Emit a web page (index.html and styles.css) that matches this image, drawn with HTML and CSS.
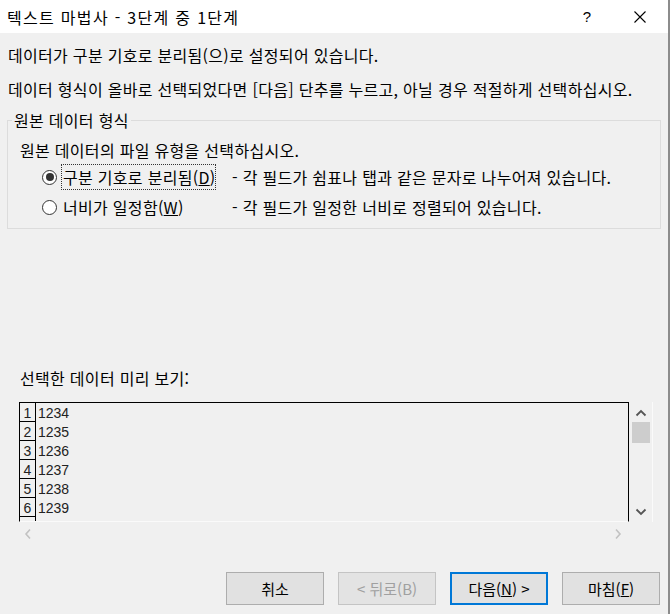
FILE: index.html
```html
<!DOCTYPE html>
<html lang="ko">
<head>
<meta charset="utf-8">
<title>텍스트 마법사</title>
<link rel="stylesheet" href="styles.css">
</head>
<body>
<div class="win">
  <div class="titlebar">
    <span class="title">텍스트 마법사 - 3단계 중 1단계</span>
    <span class="help">?</span>
    <span class="close"><svg width="14" height="14" viewBox="0 0 14 14"><path d="M1.5 1.5 L12.5 12.5 M12.5 1.5 L1.5 12.5" stroke="#000" stroke-width="1.1" fill="none"/></svg></span>
  </div>
  <div class="content">
    <p class="line l1">데이터가 구분 기호로 분리됨(으)로 설정되어 있습니다.</p>
    <p class="line l2">데이터 형식이 올바로 선택되었다면 [다음] 단추를 누르고, 아닐 경우 적절하게 선택하십시오.</p>
    <fieldset class="group">
      <legend class="legend">원본 데이터 형식</legend>
      <p class="line sub">원본 데이터의 파일 유형을 선택하십시오.</p>
      <div class="opt opt1">
        <span class="radio on"></span>
        <span class="lbl focus">구분 기호로 분리됨(<u>D</u>)</span>
        <span class="desc">- 각 필드가 쉼표나 탭과 같은 문자로 나누어져 있습니다.</span>
      </div>
      <div class="opt opt2">
        <span class="radio"></span>
        <span class="lbl">너비가 일정함(<u>W</u>)</span>
        <span class="desc">- 각 필드가 일정한 너비로 정렬되어 있습니다.</span>
      </div>
    </fieldset>
    <p class="line prevlabel">선택한 데이터 미리 보기:</p>
    <div class="preview">
      <div class="pv">
        <div class="row"><span class="num">1</span><span class="val">1234</span></div>
        <div class="row"><span class="num">2</span><span class="val">1235</span></div>
        <div class="row"><span class="num">3</span><span class="val">1236</span></div>
        <div class="row"><span class="num">4</span><span class="val">1237</span></div>
        <div class="row"><span class="num">5</span><span class="val">1238</span></div>
        <div class="row"><span class="num">6</span><span class="val">1239</span></div>
        <div class="row"><span class="num"></span><span class="val"></span></div>
      </div>
      <div class="vscroll">
        <svg class="arr" width="12" height="8" viewBox="0 0 12 8"><path d="M1.5 6.5 L6 2 L10.5 6.5" stroke="#555" stroke-width="1.8" fill="none"/></svg>
        <div class="thumb"></div>
        <div class="track"></div>
        <svg class="arr" width="12" height="8" viewBox="0 0 12 8"><path d="M1.5 1.5 L6 6 L10.5 1.5" stroke="#555" stroke-width="1.8" fill="none"/></svg>
      </div>
      <div class="hscroll">
        <svg width="8" height="12" viewBox="0 0 8 12"><path d="M6 1.5 L2 6 L6 10.5" stroke="#c2c2c2" stroke-width="1.6" fill="none"/></svg>
        <svg width="8" height="12" viewBox="0 0 8 12"><path d="M2 1.5 L6 6 L2 10.5" stroke="#c2c2c2" stroke-width="1.6" fill="none"/></svg>
      </div>
      <div class="corner"></div>
    </div>
    <div class="buttons">
      <button class="btn">취소</button>
      <button class="btn disabled">&lt; 뒤로(B)</button>
      <button class="btn default">다음(<u>N</u>) &gt;</button>
      <button class="btn">마침(<u>F</u>)</button>
    </div>
  </div>
</div>
</body>
</html>
```

FILE: styles.css
```css
html, body {
  margin: 0;
  padding: 0;
  background: #ffffff;
}
body {
  width: 672px;
  height: 614px;
  overflow: hidden;
  font-family: "Noto Sans CJK KR", "Noto Sans", sans-serif;
  font-size: 16px;
  letter-spacing: 0.3px;
  color: #000;
}
.win {
  width: 668px;
  height: 614px;
  border-right: 2px solid #8c8c8c;
  background: #f0f0f0;
  display: flex;
  flex-direction: column;
}
.titlebar {
  height: 33px;
  flex: none;
  background: #ffffff;
  display: flex;
  align-items: center;
  padding-left: 7px;
}
.title {
  font-size: 16px;
  line-height: 20px;
  flex: 1;
  letter-spacing: 1.3px;
}
.help {
  width: 20px;
  text-align: center;
  font-family: "Liberation Sans", sans-serif;
  font-size: 15px;
  margin-right: 36px;
}
.close {
  width: 14px;
  height: 14px;
  margin-right: 21px;
  display: flex;
}
.content {
  flex: 1;
  display: flex;
  flex-direction: column;
}
.line {
  margin: 0;
  line-height: 20px;
  white-space: nowrap;
}
.l1 {
  margin: 12px 0 0 8px;
}
.l2 {
  margin: 14px 0 0 8px;
}
.group {
  margin: 11px 7px 0 7px;
  padding: 0 0 8px 0;
  border: 1px solid #dcdcdc;
  min-width: 0;
}
.legend {
  padding: 0 2px;
  margin-left: 4px;
  line-height: 20px;
}
.sub {
  margin: 10px 0 0 12px;
}
.opt {
  display: flex;
  align-items: center;
  height: 26px;
  white-space: nowrap;
}
.opt1 {
  margin-top: 4px;
}
.opt2 {
  margin-top: 4px;
}
.radio {
  width: 13px;
  height: 13px;
  border: 1px solid #333;
  border-radius: 50%;
  background: #fff;
  margin-left: 34px;
  margin-right: 4px;
  position: relative;
  flex: none;
}
.radio.on::after {
  content: "";
  position: absolute;
  left: 2.5px;
  top: 2.5px;
  width: 8px;
  height: 8px;
  border-radius: 50%;
  background: #333;
}
.lbl {
  width: 152px;
  padding: 2px 0 2px 1px;
  line-height: 20px;
  border: 1px solid transparent;
  flex: none;
  overflow: hidden;
}
.lbl.focus {
  border: 1px dotted #333;
}
.desc {
  margin-left: 16px;
  line-height: 20px;
}
.prevlabel {
  margin: 139px 0 0 20px;
}
.preview {
  margin: 14px 0 0 19px;
  width: 634px;
  display: grid;
  grid-template-columns: 610px 24px;
  grid-template-rows: 120px 23px;
}
.pv {
  border: 1px solid #000;
  border-bottom: 1px solid #fafafa;
  overflow: hidden;
  font-family: "Liberation Sans", sans-serif;
  font-size: 14px;
  letter-spacing: 0;
  color: #222;
}
.row {
  display: flex;
  height: 19px;
}
.num {
  width: 15px;
  border-right: 1px solid #000;
  border-bottom: 1px solid #000;
  text-align: center;
  line-height: 21px;
  flex: none;
}
.val {
  padding-left: 2px;
  line-height: 21px;
}
.vscroll {
  display: flex;
  flex-direction: column;
  align-items: center;
  border-right: 1px solid #fafafa;
}
.vscroll .arr {
  margin-top: 7px;
  flex: none;
}
.thumb {
  width: 18px;
  height: 21px;
  background: #cdcdcd;
  margin-top: 5px;
  flex: none;
}
.track {
  flex: 1;
}
.vscroll .arr:last-child {
  margin: 0 0 6px 0;
}
.hscroll {
  display: flex;
  justify-content: space-between;
  align-items: center;
  padding: 0 7px 0 5px;
}
.corner {
  background: #f0f0f0;
}
.buttons {
  display: flex;
  justify-content: flex-end;
  gap: 14px;
  margin: 27px 8px 0 0;
}
.btn {
  width: 98px;
  height: 33px;
  background: #e1e1e1;
  border: 1px solid #adadad;
  font-family: "Noto Sans CJK KR", "Noto Sans", sans-serif;
  font-size: 15px;
  color: #000;
  padding: 0;
}
.btn.disabled {
  color: #a0a0a0;
  border-color: #c4c4c4;
  background: #e3e3e3;
}
.btn.default {
  border: 2px solid #0078d7;
}
```
